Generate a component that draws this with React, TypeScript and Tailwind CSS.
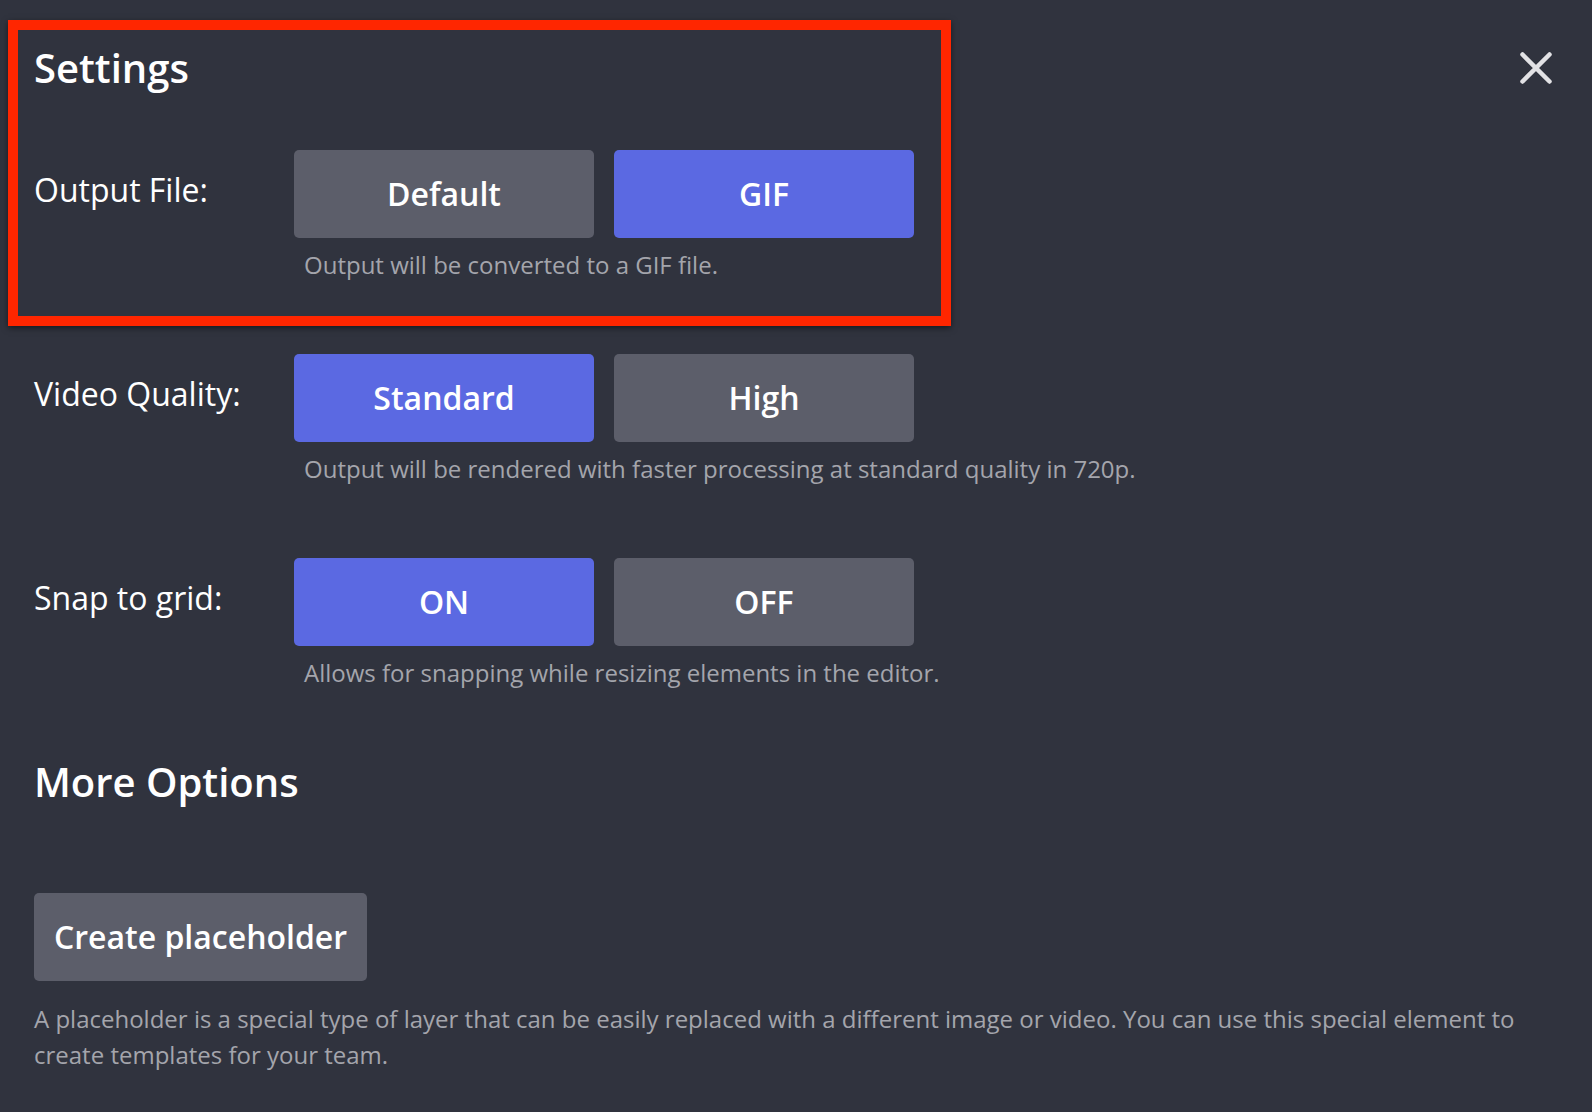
import { useState } from 'react';

type Option = { value: string; label: string };

type RowProps = {
  label: string;
  options: Option[];
  value: string;
  onChange: (value: string) => void;
  hint: string;
};

function SettingRow({ label, options, value, onChange, hint }: RowProps) {
  return (
    <div className="flex items-start">
      <div className="mt-[16px] w-[260px] flex-none text-[32px] leading-[48px] text-white">{label}</div>
      <div className="flex flex-col">
        <div className="flex gap-5">
          {options.map((opt) => (
            <button
              key={opt.value}
              type="button"
              onClick={() => onChange(opt.value)}
              className={`h-[88px] w-[300px] rounded-[5px] text-[32px] font-semibold text-white ${
                value === opt.value ? 'bg-[#5b69e2]' : 'bg-[#5c5e6a]'
              }`}
            >
              {opt.label}
            </button>
          ))}
        </div>
        <p className="ml-[10px] mt-[9px] text-[24px] leading-[36px] text-[#a4a5ac]">{hint}</p>
      </div>
    </div>
  );
}

export default function App() {
  const [output, setOutput] = useState('gif');
  const [quality, setQuality] = useState('standard');
  const [snap, setSnap] = useState('on');

  return (
    <div
      className="relative h-[1112px] w-full overflow-hidden bg-[#30333e] px-[34px] pt-[44px]"
      style={{ fontFamily: '"Open Sans", "Noto Sans", sans-serif' }}
    >
      <div className="flex items-start justify-between">
        <h1 className="text-[40px] font-semibold leading-[48px] text-white">Settings</h1>
        <button type="button" aria-label="Close" className="mr-[6px] mt-[8px] text-[#e2e2e5]">
          <svg width="32" height="32" viewBox="0 0 32 32" fill="none" stroke="currentColor" strokeWidth="4.5" strokeLinecap="round">
            <path d="M2.5 2.5 29.5 29.5M29.5 2.5 2.5 29.5" />
          </svg>
        </button>
      </div>

      <div className="mt-[58px] flex flex-col gap-[71px]">
        <SettingRow
          label="Output File:"
          options={[
            { value: 'default', label: 'Default' },
            { value: 'gif', label: 'GIF' },
          ]}
          value={output}
          onChange={setOutput}
          hint="Output will be converted to a GIF file."
        />
        <SettingRow
          label="Video Quality:"
          options={[
            { value: 'standard', label: 'Standard' },
            { value: 'high', label: 'High' },
          ]}
          value={quality}
          onChange={setQuality}
          hint="Output will be rendered with faster processing at standard quality in 720p."
        />
        <SettingRow
          label="Snap to grid:"
          options={[
            { value: 'on', label: 'ON' },
            { value: 'off', label: 'OFF' },
          ]}
          value={snap}
          onChange={setSnap}
          hint="Allows for snapping while resizing elements in the editor."
        />
      </div>

      <h2 className="mt-[67px] text-[40px] font-semibold leading-[48px] text-white">More Options</h2>

      <button
        type="button"
        className="mt-[87px] h-[88px] w-[333px] rounded-[5px] bg-[#5c5e6a] text-[32px] font-semibold text-white"
      >
        Create placeholder
      </button>
      <p className="mt-[20px] text-[24px] leading-[36px] text-[#a4a5ac]">
        A placeholder is a special type of layer that can be easily replaced with a different image or video. You can use
        this special element to create templates for your team.
      </p>

      {/* annotation box over the first section */}
      <div className="pointer-events-none absolute left-[8px] top-[20px] h-[306px] w-[943px] border-[10px] border-[#ff2600] shadow-[0_2px_6px_rgba(0,0,0,0.5)]" />
    </div>
  );
}
